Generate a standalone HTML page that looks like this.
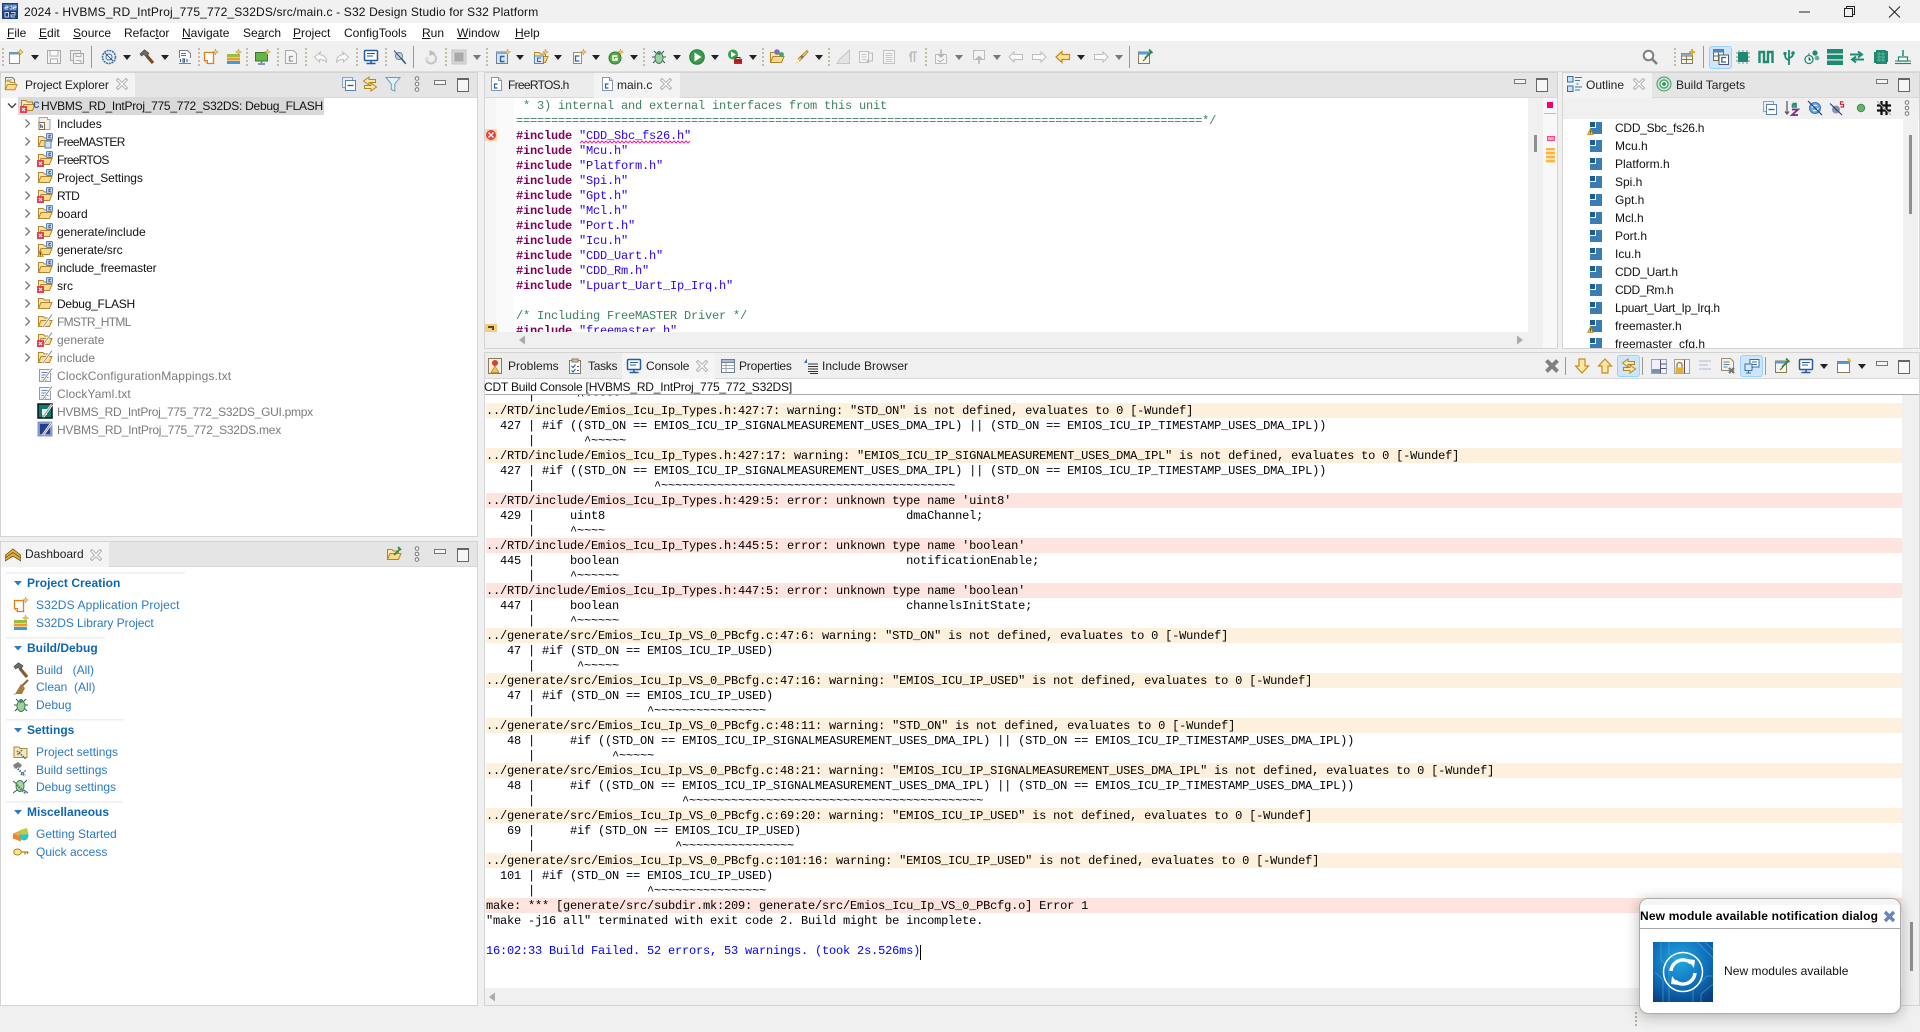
<!DOCTYPE html>
<html lang="en"><head><meta charset="utf-8"><title>S32 Design Studio</title>
<style>
html,body{margin:0;padding:0;width:1920px;height:1032px;overflow:hidden;background:#f0f0f0}
body{position:relative;font:12px/18px "Liberation Sans","Noto Sans CJK KR",sans-serif;color:#111}
div,span.a{position:absolute;white-space:pre}
.i{position:absolute;width:16px;height:16px;overflow:visible}
.b{background:#fff}
.ar{position:absolute;width:0;height:0;border:4.5px solid transparent;border-top:5px solid #222;border-bottom:0;top:55px}
.ar.gr{border-top-color:#777}
.g{width:2px;height:18px;top:48px;background:repeating-linear-gradient(#c4bca8 0 2px,transparent 2px 4px)}
.s{width:1px;height:22px;top:46px;background:#999}
.m{top:24px;line-height:18px;color:#111}
.tree{left:57px;color:#111}
.gy{color:#7b7b7b}
.o{left:1615px;color:#111}
.d{color:#2a7ac4;left:36px}
.h{color:#0f66ae;left:27px;font-weight:bold}
.mono{font-family:"Liberation Mono",monospace;font-size:12px;letter-spacing:-.2px;line-height:17px;height:15px}
.inc{color:#7f0055;font-weight:bold}.str{color:#2a00ff}.cm{color:#3f7f5f}
.l{left:0;width:1416px;height:15px;line-height:17px;color:#000}
.w{background:#fdf0dc}.e{background:#fde4df}
.tb{top:76px;color:#222}
.min{position:absolute;width:10px;height:3px;border:1px solid #777;background:#f4f4f4}
.max{position:absolute;width:10px;height:11px;border:1px solid #666;border-top-width:2px;background:#f6f6f6}
.sec{height:3px;background:linear-gradient(#ececec,#fff);left:6px}
</style></head><body>
<svg width="0" height="0" style="position:absolute"><defs>
<symbol id="x" viewBox="0 0 12 12"><path d="M2 2L10 10M10 2L2 10" stroke="#9a9a9a" stroke-width="3" stroke-linecap="square"/><path d="M2 2L10 10M10 2L2 10" stroke="#fff" stroke-width="1.500" stroke-linecap="square"/></symbol>
<symbol id="fb" viewBox="0 0 16 16"><path d="M1.500 13.500V3.500h4.500l1.500 1.500h5v2.500" fill="#fbe7a8" stroke="#b08530"/><path d="M1.500 13.500L4 7.500h11l-2.500 6z" fill="#fdd98b" stroke="#b08530"/></symbol>
<symbol id="fc" viewBox="0 0 16 16"><use href="#fb"/><rect x="9.500" y=".5" width="6" height="6" rx="1" fill="#c6d8ee" stroke="#5a82b8"/><path d="M14 2.200h-2v2.600h2" stroke="#2f5c9e" fill="none"/></symbol>
<symbol id="er" viewBox="0 0 16 16"><rect y="9" width="7" height="7" fill="#e2404f"/><path d="M2 11l3 3M5 11l-3 3" stroke="#fff"/></symbol>
<symbol id="wn" viewBox="0 0 16 16"><path d="M.5 16L3.500 9.500 6.500 16z" fill="#f4c54a" stroke="#a87c1c" stroke-width=".7"/><path d="M3.500 11.500v2.300M3.500 14.500v.8" stroke="#5a3c00"/></symbol>
<symbol id="sl" viewBox="0 0 16 16"><path d="M6 14L15 1.500" stroke="#fff" stroke-width="2.500"/><path d="M6 14L15 1.500" stroke="#8a8a8a"/></symbol>
<symbol id="txt" viewBox="0 0 16 16"><path d="M2.500 2.500h11v12h-11z" fill="#f4f6fa" stroke="#8d9ab0"/><path d="M4.500 5.500h7M4.500 8h7M4.500 10.500h7M4.500 13h5" stroke="#6d86b8"/><use href="#sl"/></symbol>
<symbol id="cf" viewBox="0 0 16 16"><path d="M3.500 1.500h7l3 3v10h-10z" fill="#fff" stroke="#8897ad"/><path d="M10.500 1.500v3h3" fill="#dde3ec" stroke="#8897ad"/><path d="M9.500 8h-3v4h3" stroke="#2b63a8" fill="none" stroke-width="1.200"/></symbol>
<symbol id="inc" viewBox="0 0 16 16"><path d="M2 2.500h5.500l3 0v2h2.500v10h-8v-2h-3z" fill="#eef0f4" stroke="#9ba6b8"/><path d="M2 7.500h5.500v7H2z" fill="#fff" stroke="#8a6c30"/><path d="M3.700 9v4M3.700 11h1.700v2" stroke="#2f5c9e" fill="none"/></symbol>
<symbol id="hd" viewBox="0 0 14 14"><rect x="1" y="1" width="5" height="5" fill="#1e5c96"/><path d="M7 1h6v12H1V7h6z" fill="#3a7db5"/></symbol>
<symbol id="new" viewBox="0 0 16 16"><path d="M1.500 3.500h10v11h-10z" fill="#fff" stroke="#9a8c6e"/><path d="M1.500 3.500h10v2h-10z" fill="#5b9bd5"/><path d="M12.500 0l1 2 2 1-2 1-1 2-1-2-2-1 2-1z" fill="#f3cf5d" stroke="#b8902c" stroke-width=".5"/></symbol>
<symbol id="sv" viewBox="0 0 16 16"><path d="M1.500 1.500h13v13h-13z" fill="#f2f2f2" stroke="#a8a8a8"/><path d="M4 2v5h8V2M4.500 14v-4h7v4" fill="#fafafa" stroke="#b4b4b4"/></symbol>
<symbol id="sva" viewBox="0 0 16 16"><path d="M1.500 1.500h10v10h-10z" fill="#ececec" stroke="#aaa"/><path d="M4.500 4.500h10v10h-10z" fill="#f2f2f2" stroke="#a8a8a8"/><path d="M7 11.500h5v3M7 4.500v3h5v-3" fill="none" stroke="#b4b4b4"/></symbol>
<symbol id="cfg" viewBox="0 0 16 16"><circle cx="8" cy="8" r="6.500" fill="#e4eef8" stroke="#456f9e" stroke-dasharray="2 .8" stroke-width="1.600"/><circle cx="8" cy="8" r="3" fill="#fff" stroke="#456f9e"/><path d="M4 4L12 12" stroke="#345a88"/></symbol>
<symbol id="ham" viewBox="0 0 16 16"><path d="M7.500 6.500L14 14" stroke="#7b4a20" stroke-width="3.200"/><path d="M1 5L5.500 .8l4.500 3.500-2.500 3-3-1.800L2.500 7z" fill="#6c6c6c" stroke="#3f3f3f" stroke-width=".6"/></symbol>
<symbol id="bin" viewBox="0 0 16 16"><path d="M2.500 1.500h8l3 3v10h-11z" fill="#fff" stroke="#7a7f8c"/><path d="M4 4.500h5M4 6.500h5" stroke="#4b78b0"/><rect x="2" y="9" width="12" height="5" fill="#eef2f8"/><path d="M3.500 10v3M6 10h1.500v3H6zM10 10v3M12 10" stroke="#28508a" fill="none" stroke-width=".9"/></symbol>
<symbol id="onw" viewBox="0 0 16 16"><path d="M1.500 3.500h9v11h-6l-3-3z" fill="#fff" stroke="#e67a17" stroke-width="1.300"/><path d="M1.500 11.500h3v3" fill="#fbd9aa" stroke="#e67a17"/><path d="M12.500 0l.8 2.200 2.200.8-2.200.8-.8 2.200-.8-2.200L9.500 3l2.200-.8z" fill="#f3cf5d" stroke="#b8902c" stroke-width=".5"/></symbol>
<symbol id="stk" viewBox="0 0 16 16"><rect x="1" y="5" width="13" height="3" fill="#9abf3f"/><rect x="1" y="8.500" width="13" height="3" fill="#f39a2d"/><rect x="1" y="12" width="13" height="3" fill="#3a9fd8"/><path d="M12.500 0l.8 2.200 2.200.8-2.200.8-.8 2.200-.8-2.200L9.500 3l2.200-.8z" fill="#f3cf5d" stroke="#b8902c" stroke-width=".5"/></symbol>
<symbol id="gmn" viewBox="0 0 16 16"><rect x=".5" y="3.500" width="12" height="8.500" fill="#69b24a" stroke="#2f7a35"/><path d="M6.500 12v2M3 15h7" stroke="#567a9e" stroke-width="1.500"/><path d="M12.500 0l.8 2.200 2.200.8-2.200.8-.8 2.200-.8-2.200L9.500 3l2.200-.8z" fill="#f3cf5d" stroke="#b8902c" stroke-width=".5"/></symbol>
<symbol id="cdg" viewBox="0 0 16 16"><path d="M2.500 1.500h8l3 3v10h-11z" fill="#f4f4f4" stroke="#a9a9a9"/><path d="M10 7.500H6.500v4.500H10" stroke="#999" fill="none" stroke-width="1.300"/></symbol>
<symbol id="und" viewBox="0 0 16 16"><path d="M8 2.500L1.500 8l5 5v-2.500c3 0 5 .5 7 2.500 0-5-3-7-7-7.500z" fill="#fafafa" stroke="#c0c0c0"/></symbol>
<symbol id="red" viewBox="0 0 16 16"><path d="M8 2.500L14.500 8l-5 5v-2.500c-3 0-5 .5-7 2.500 0-5 3-7 7-7.500z" fill="#fafafa" stroke="#c0c0c0"/></symbol>
<symbol id="bmn" viewBox="0 0 16 16"><rect x="1.500" y="1.500" width="13" height="10" rx="1" fill="#fff" stroke="#245c9e" stroke-width="1.500"/><path d="M4 4.500h8M4 7h6" stroke="#245c9e"/><path d="M8 12v2M3.500 14.500h9" stroke="#245c9e" stroke-width="1.500"/></symbol>
<symbol id="pin" viewBox="0 0 16 16"><circle cx="7" cy="7" r="3.500" fill="#c8d4e0" stroke="#688"/><path d="M9.500 9.500L13 14" stroke="#456" stroke-width="1.500"/><path d="M2 1.500L14 15" stroke="#2450a0"/></symbol>
<symbol id="dbg" viewBox="0 0 16 16"><path d="M8 4.500a5 5 0 1 1-5 5" fill="none" stroke="#c4c4c4" stroke-width="2"/><path d="M6.500 1l6 3-6 3z" fill="#bdbdbd"/><circle cx="4" cy="10" r="2" fill="#ddd"/></symbol>
<symbol id="chp" viewBox="0 0 16 16"><rect x="1" y="1" width="14" height="14" fill="#d7d7d7" stroke="#c4c4c4"/><rect x="3.500" y="3.500" width="9" height="9" fill="#a9a9a9"/></symbol>
<symbol id="cla" viewBox="0 0 16 16"><path d="M1.500 3h11v11.500h-11z" fill="#dae6f4" stroke="#6c7f9a"/><path d="M1.500 3h11v2h-11z" fill="#8aa8cc"/><path d="M9.500 7.500H5.500v5h4" stroke="#2b63a8" fill="none" stroke-width="1.400"/><path d="M12.500 0l.8 2.200 2.200.8-2.200.8-.8 2.200-.8-2.200L9.500 3l2.200-.8z" fill="#f3cf5d" stroke="#b8902c" stroke-width=".5"/></symbol>
<symbol id="cl2" viewBox="0 0 16 16"><use href="#fb"/><rect x="1.500" y="7" width="9" height="7.500" fill="#dae6f4" stroke="#5a82b8"/><path d="M8 9H4.500v3.500H8" stroke="#2b63a8" fill="none"/><path d="M12.500 0l.8 2.200 2.200.8-2.200.8-.8 2.200-.8-2.200L9.500 3l2.200-.8z" fill="#f3cf5d" stroke="#b8902c" stroke-width=".5"/></symbol>
<symbol id="cl3" viewBox="0 0 16 16"><path d="M2.500 3.500h8v11h-8z" fill="#fff" stroke="#9a8c6e"/><path d="M8.500 7H4.500v5h4" stroke="#2b63a8" fill="none" stroke-width="1.300"/><path d="M12.500 0l.8 2.200 2.200.8-2.200.8-.8 2.200-.8-2.200L9.500 3l2.200-.8z" fill="#f3cf5d" stroke="#b8902c" stroke-width=".5"/></symbol>
<symbol id="gns" viewBox="0 0 16 16"><circle cx="7" cy="9" r="6" fill="#58a845" stroke="#2e7a38"/><path d="M9.500 7H5v4h4V9.500H7" stroke="#fff" fill="none" stroke-width="1.400"/><path d="M12.500 0l.8 2.200 2.200.8-2.200.8-.8 2.200-.8-2.200L9.500 3l2.200-.8z" fill="#f3cf5d" stroke="#b8902c" stroke-width=".5"/></symbol>
<symbol id="bug" viewBox="0 0 16 16"><path d="M3 2l3 3M13 2l-3 3M1 8h3M15 8h-3M2 14l3-3M14 14l-3-3" stroke="#2a5c5a"/><ellipse cx="8" cy="9" rx="4" ry="5.500" fill="#9fcf9a" stroke="#3d7a58"/><circle cx="8" cy="4" r="2" fill="#4a8a6a"/></symbol>
<symbol id="run" viewBox="0 0 16 16"><circle cx="8" cy="8" r="7.300" fill="#3d9b4a" stroke="#1f7a3c"/><path d="M5.500 3.500L12.500 8l-7 4.500z" fill="#fff"/></symbol>
<symbol id="ext" viewBox="0 0 16 16"><circle cx="6" cy="5.500" r="5" fill="#3d9b4a"/><path d="M4 2.500L9 5.500 4 8.500z" fill="#fff"/><rect x="7" y="10" width="8" height="5" fill="#cc2222"/><path d="M9 10V8.500h4V10M7 12h8" stroke="#8a1414" fill="none"/></symbol>
<symbol id="opn" viewBox="0 0 16 16"><use href="#fb"/><circle cx="8" cy="3" r="2.800" fill="#7a6cc0"/><circle cx="12.500" cy="5.500" r="2.400" fill="#45a560"/></symbol>
<symbol id="pen" viewBox="0 0 16 16"><path d="M14 1.500L6 9l-3.500 5L7.500 11l7.500-8z" fill="#f4d78f" stroke="#b98a30"/><path d="M4 9.500L1 15l5.500-3z" fill="#fff7c7"/><path d="M8 7l2 2" stroke="#777" stroke-width="3"/></symbol>
<symbol id="gpn" viewBox="0 0 16 16"><path d="M14.500 1L5 10l-3 4.500h12.500z" fill="#e4e4e4" stroke="#c6c6c6"/></symbol>
<symbol id="gd1" viewBox="0 0 16 16"><path d="M1.500 2.500h9v11h-9z" fill="#f6f6f6" stroke="#c0c0c0"/><path d="M3.500 5.500h5M3.500 8h5M3.500 10.500h5" stroke="#c8c8c8"/><path d="M10 4h4.500v8H9M11 14l-2-2 2-2" fill="none" stroke="#bcbcbc"/></symbol>
<symbol id="gd2" viewBox="0 0 16 16"><path d="M2.500 1.500h11v13h-11z" fill="#f6f6f6" stroke="#c0c0c0"/><path d="M4.500 4.500h7M4.500 6.500h7M4.500 8.500h7M4.500 10.500h7M4.500 12.500h7" stroke="#c6c6c6"/></symbol>
<symbol id="par" viewBox="0 0 16 16"><path d="M7 3h6M7 3v10M10.500 3v10" stroke="#bcbcbc" stroke-width="1.500" fill="none"/><path d="M7 3.500a3 3 0 0 0 0 5.500z" fill="#bcbcbc"/></symbol>
<symbol id="dns" viewBox="0 0 16 16"><path d="M2.500 5.500h11v9h-11z" fill="#f4f4f4" stroke="#bdbdbd"/><path d="M8 0.500v7M5 5l3 3 3-3" stroke="#b4b4b4" fill="none" stroke-width="1.500"/><path d="M5 11l2 2 4-3" stroke="#b0b0b0" fill="none"/></symbol>
<symbol id="ups" viewBox="0 0 16 16"><path d="M2.500 1.500h11v9h-11z" fill="#f4f4f4" stroke="#bdbdbd"/><path d="M8 15V8M5 10.500l3-3 3 3" stroke="#b4b4b4" fill="none" stroke-width="1.500"/></symbol>
<symbol id="lbk" viewBox="0 0 16 16"><path d="M1 8l5-5v2.500h8.500v5H6V13z" fill="#fafafa" stroke="#bcbcbc"/></symbol>
<symbol id="rfw" viewBox="0 0 16 16"><path d="M15 8l-5-5v2.500H1.500v5H10V13z" fill="#fafafa" stroke="#bcbcbc"/></symbol>
<symbol id="ybk" viewBox="0 0 16 16"><path d="M1 8l6-5.500V5.500h7.500v5H7v3z" fill="#fbe29a" stroke="#c88a1a" stroke-width="1.200"/></symbol>
<symbol id="pup" viewBox="0 0 16 16"><path d="M1.500 3h11v11.500h-11z" fill="#f6f6ec" stroke="#8a7a55"/><path d="M1.500 3h11v2.500h-11z" fill="#5b9bd5"/><path d="M8 9L14.500 3M12 .5l3.500 3.500" stroke="#2a8a3a" stroke-width="1.800"/><path d="M6 12l3-3" stroke="#555"/></symbol>
<symbol id="mag" viewBox="0 0 16 16"><circle cx="6.500" cy="6.500" r="4.800" fill="#fff" stroke="#808080" stroke-width="2"/><path d="M10 10L15 15" stroke="#808080" stroke-width="2.600"/></symbol>
<symbol id="prs" viewBox="0 0 16 16"><path d="M1.500 4.500h11v10h-11z" fill="#f6f3ea" stroke="#8a7a55"/><path d="M1.500 4.500h11v2.500h-11zM6.500 7v7.500M1.500 10.500h11" fill="none" stroke="#8a7a55"/><rect x="1.500" y="4.500" width="11" height="2.500" fill="#8aa8cc"/><path d="M12 0v6M9 3h6" stroke="#e0aa2a" stroke-width="2"/></symbol>
<symbol id="prc" viewBox="0 0 16 16"><path d="M.5 .5h10v11H.5z" fill="#eef2f8" stroke="#7c6a44"/><rect x=".5" y=".5" width="10" height="3" fill="#4f8ac4"/><path d="M.5 7h5M5.500 3.500v8" stroke="#7c6a44"/><rect x="6" y="6" width="9.500" height="9.500" fill="#fff" stroke="#556"/><path d="M13 8.500H8.800v4.500H13" stroke="#2b63a8" fill="none" stroke-width="1.300"/></symbol>
<symbol id="t1" viewBox="0 0 16 16"><path d="M1 4h14M1 8h14M1 12h14M4 1v14M8 1v14M12 1v14" stroke="#4e9a8a" stroke-width=".9"/><rect x="3" y="3" width="10" height="10" rx="1" fill="#1f8a72"/></symbol>
<symbol id="t2" viewBox="0 0 16 16"><path d="M1.500 14V3h4.500v10h4V3h4.500v11" fill="none" stroke="#1f8a72" stroke-width="2.400"/></symbol>
<symbol id="t3" viewBox="0 0 16 16"><path d="M8 1v15M8 11C4 10 4 7 4 5M8 9c4-1 4-3 4-4" fill="none" stroke="#1f8a72" stroke-width="1.800"/><rect x="2.500" y="3" width="3" height="3" fill="#1f8a72"/><circle cx="12" cy="4" r="1.800" fill="#1f8a72"/></symbol>
<symbol id="t4" viewBox="0 0 16 16"><circle cx="5" cy="10.500" r="4" fill="#fff" stroke="#1f8a72" stroke-width="1.300"/><path d="M5 8v3h2M4 5h2" stroke="#1f8a72"/><circle cx="11" cy="4" r="2.600" fill="#1f8a72"/><circle cx="13" cy="9" r="2.300" fill="#6aac9a"/></symbol>
<symbol id="t5" viewBox="0 0 16 16"><rect width="16" height="4.500" fill="#1f8a72"/><rect y="5.800" width="16" height="4.500" fill="#1f8a72"/><rect y="11.500" width="16" height="4.500" fill="#1f8a72"/></symbol>
<symbol id="t6" viewBox="0 0 16 16"><path d="M1 5.500h11M9 2.500l4 3-4 3M15 10.500H4M7 7.500l-4 3 4 3" fill="none" stroke="#1f8a72" stroke-width="2"/></symbol>
<symbol id="t7" viewBox="0 0 16 16"><path d="M1 3v11h2v1h11v-2h1V2h-2V1H3v2z" fill="#1f8a72"/><path d="M4 5h8M4 8h8M4 11h8M6 3v10M10 3v10" stroke="#6ebfa8" stroke-width=".7"/></symbol>
<symbol id="t8" viewBox="0 0 16 16"><path d="M8 1v6" stroke="#1f8a72" stroke-width="1.500"/><path d="M3.500 8h9v4h-9z" fill="#fff" stroke="#1f8a72" stroke-width="1.200"/><path d="M0 14.500h16" stroke="#1f8a72" stroke-width="1.200"/><path d="M0 12h3M13 12h3" stroke="#1f8a72"/></symbol>
<symbol id="col" viewBox="0 0 16 16"><path d="M1.500 1.500h10v10h-10z" fill="#e8eef6" stroke="#8aa4c4"/><path d="M4.500 4.500h10v10h-10z" fill="#fff" stroke="#5a82b0"/><path d="M6.500 9.500h6" stroke="#2f5c9e" stroke-width="1.300"/></symbol>
<symbol id="lnk" viewBox="0 0 16 16"><path d="M7 1L1.500 5 7 9V6.500h6.500v-3H7z" fill="#fbe7a8" stroke="#b5851c"/><path d="M9 7l5.500 4L9 15v-2.500H2.500v-3H9z" fill="#fbe7a8" stroke="#b5851c"/></symbol>
<symbol id="flt" viewBox="0 0 16 16"><path d="M1 1.500h14L9.800 8v7l-3.500-1.500V8z" fill="#e4f0f8" stroke="#6a9bb8"/></symbol>
<symbol id="mor" viewBox="0 0 16 16"><circle cx="8" cy="2.500" r="1.800" fill="#fff" stroke="#777"/><circle cx="8" cy="8" r="1.800" fill="#fff" stroke="#777"/><circle cx="8" cy="13.500" r="1.800" fill="#fff" stroke="#777"/></symbol>
<symbol id="pe" viewBox="0 0 16 16"><path d="M1.500 1.500h7l2 2v5h-9z" fill="#eef0f4" stroke="#8a7a55"/><path d="M3 4h5M3 6h5" stroke="#c8a45a"/><use href="#fb" x="0" y="2" width="14" height="14"/></symbol>
<symbol id="otl" viewBox="0 0 16 16"><rect x=".5" y=".5" width="5.500" height="5.500" fill="#cfe0f2" stroke="#2f6fb0"/><rect x=".5" y="10" width="5.500" height="5.500" fill="#cfe0f2" stroke="#2f6fb0"/><path d="M8 1.500h7M8 4.500h5M8 11h7M8 14h5M9.500 8h2" stroke="#3a7a9e"/></symbol>
<symbol id="btg" viewBox="0 0 16 16"><circle cx="8" cy="8" r="7" fill="#c8e8d4" stroke="#3d9a62"/><circle cx="8" cy="8" r="4" fill="#fff" stroke="#3d9a62" stroke-width="1.300"/><circle cx="8" cy="8" r="2" fill="#3d9a62"/></symbol>
<symbol id="az" viewBox="0 0 16 16"><path d="M3 1v13M1 11.500L3 14l2-2.500" fill="none" stroke="#555" stroke-width="1.200"/><path d="M8.500 3.500h3.500v3.500H8.500V5h3.500" fill="none" stroke="#1f8a72" stroke-width="1.600"/><path d="M8 9.500h6L8 15h6" fill="none" stroke="#7a2a8a" stroke-width="1.800"/></symbol>
<symbol id="nf" viewBox="0 0 16 16"><circle cx="8" cy="8" r="5.500" fill="#6fa8dc" stroke="#3a75b0"/><path d="M5 8a3 3 0 0 1 5-2M11 8a3 3 0 0 1-5 2" stroke="#fff" fill="none"/><path d="M1 1L15 15" stroke="#1b3f90" stroke-width="1.200"/></symbol>
<symbol id="ns" viewBox="0 0 16 16"><circle cx="7" cy="9.500" r="4" fill="#8a95a5"/><path d="M1 3.500L13 15" stroke="#1b3f90" stroke-width="1.200"/><path d="M14.500 1.800h-3v2.500h3V7h-3" stroke="#d0203c" fill="none" stroke-width="1.200"/></symbol>
<symbol id="dot" viewBox="0 0 16 16"><circle cx="8" cy="8" r="3.700" fill="#6ab06a" stroke="#468a5a"/></symbol>
<symbol id="hsh" viewBox="0 0 16 16"><path d="M5.500 1v14M10.500 1v14M1 5.500h14M1 10.500h14" stroke="#111" stroke-width="2.300"/><path d="M1 1l14 14" stroke="#aaa"/></symbol>
<symbol id="prb" viewBox="0 0 16 16"><path d="M1.500 .5h13v15h-13z" fill="#f4f0e4" stroke="#8a7a55"/><circle cx="8" cy="5" r="3" fill="#e03a3a"/><path d="M8 8L4 14.500h8z" fill="#f4c54a" stroke="#a87c1c" stroke-width=".7"/></symbol>
<symbol id="tsk" viewBox="0 0 16 16"><path d="M2.500 2.500h11v13h-11z" fill="#fff" stroke="#8a7a55"/><path d="M5 1h6v3H5z" fill="#cfc8b2" stroke="#8a7a55"/><path d="M4.500 8l1.500 1.500 2.500-3M4.500 12.500l1.500 1.500 2.500-3M10 8.500h2M10 12.500h2" stroke="#2f5c9e" fill="none" stroke-width="1.100"/></symbol>
<symbol id="prp" viewBox="0 0 16 16"><path d="M1.500 1.500h13v13h-13z" fill="#fff" stroke="#6e7e98"/><path d="M1.500 1.500h13v3h-13z" fill="#a7bcd8" stroke="#6e7e98"/><path d="M1.500 7.500h13M1.500 10.500h13M6 4.500v10" stroke="#9aa6b8"/></symbol>
<symbol id="inb" viewBox="0 0 16 16"><path d="M5 6h10M5 8.500h10M5 11h10M5 13.500h10M7 15.500h8" stroke="#333"/><path d="M1 5L4 0.500V5z" fill="#2f6fb0"/></symbol>
<symbol id="gx" viewBox="0 0 16 16"><path d="M2.500 2.500L13.500 13.500M13.500 2.500L2.500 13.500" stroke="#808080" stroke-width="4"/></symbol>
<symbol id="dn" viewBox="0 0 16 16"><path d="M5 1h6v7h3.500L8 15 1.500 8H5z" fill="#fbe7a8" stroke="#c88a1a" stroke-width="1.200"/></symbol>
<symbol id="up" viewBox="0 0 16 16"><path d="M5 15h6V8h3.500L8 1 1.500 8H5z" fill="#fbe7a8" stroke="#c88a1a" stroke-width="1.200"/></symbol>
<symbol id="c1" viewBox="0 0 16 16"><path d="M.5 1.500h15v14H.5z" fill="#eef" stroke="#9aa6b8"/><path d="M9.500 1.500v14M9.500 6h6M9.500 10.500h6" stroke="#556"/><rect x="1" y="11" width="8" height="4" fill="#7a90b0"/></symbol>
<symbol id="c2" viewBox="0 0 16 16"><path d="M.5 1.500h15v14H.5z" fill="#f4f4f4" stroke="#9aa6b8"/><path d="M10.500 1.500v14" stroke="#556"/><path d="M3 9.500V7a2.500 2.500 0 0 1 5 0v2.500" fill="none" stroke="#a07818" stroke-width="1.200"/><rect x="1.500" y="9.500" width="8" height="6" fill="#e0b23a"/></symbol>
<symbol id="c3" viewBox="0 0 16 16"><path d="M2 3h12M2 7h9M2 11h12" stroke="#b8c6d8" stroke-width="1.200"/></symbol>
<symbol id="c4" viewBox="0 0 16 16"><path d="M1.500 .5h9l3 3v9h-12z" fill="#f4f1e6" stroke="#9a8c6e"/><path d="M3.500 4h6M3.500 6.500h6M3.500 9h4" stroke="#5f82b0"/><path d="M9 10l5 5M14 10l-5 5" stroke="#777" stroke-width="2.200"/></symbol>
<symbol id="c5" viewBox="0 0 16 16"><path d="M6 1.500h9v7.500H9l-3 3z" fill="#fff" stroke="#3a6ea8"/><path d="M8 4h5M8 6.500h5" stroke="#3a6ea8"/><rect x="1" y="6" width="7" height="6.500" fill="#dbe6f3" stroke="#3a6ea8"/><path d="M4.500 12.500v2M2 15h5" stroke="#3a6ea8"/></symbol>
<symbol id="c6" viewBox="0 0 16 16"><path d="M1.500 3.500h12v11h-12z" fill="#fff" stroke="#8a7a55"/><rect x="1.500" y="3.500" width="12" height="2.500" fill="#5b9bd5"/><path d="M12 1l2.500 3" stroke="#e0aa2a" stroke-width="2"/><path d="M11.500 .5a3 3 0 0 1 3 3" fill="none" stroke="#e8c55a" stroke-width="1.500"/></symbol>
<symbol id="bld" viewBox="0 0 16 16"><path d="M7 6.500L14 15" stroke="#8a5a2a" stroke-width="3.200"/><path d="M1 4.500L5.500 .8 10 4 7.500 7.500 5 5.500 2.500 7z" fill="#6c6c6c" stroke="#3f3f3f" stroke-width=".6"/></symbol>
<symbol id="cln" viewBox="0 0 16 16"><path d="M15 1L8 8" stroke="#8a6a3a" stroke-width="2"/><path d="M8 5l4 4-3 6-7 0z" fill="#a87a3c"/><path d="M2 15l-1 1" stroke="#999"/></symbol>
<symbol id="gs" viewBox="0 0 16 16"><path d="M0 7.500l7-3 8 3-7 3z" fill="#f2a646"/><path d="M0 7.500l8 3v5l-8-3z" fill="#e8862a"/><circle cx="11" cy="10" r="4.500" fill="#36c0c8"/><path d="M7 4l7-2 1.500 6L8 9z" fill="#b2d243"/></symbol>
<symbol id="key" viewBox="0 0 16 16"><ellipse cx="4.500" cy="8" rx="3.800" ry="3" fill="#fce28a" stroke="#b0821f"/><path d="M8 8h7.500M12 8v2.500M14.500 8v2" stroke="#b0821f" stroke-width="1.300" fill="none"/></symbol>
<symbol id="hf" viewBox="0 0 16 16"><path d="M0 9.500L8 3l8 6.500V15l-8-5-8 5z" fill="#eab53c" stroke="#6a5012" stroke-width=".8"/><path d="M0 12L8 6.500 16 12" fill="none" stroke="#6a5012" stroke-width=".8"/></symbol>
<symbol id="st1" viewBox="0 0 16 16"><path d="M1 6V3h5l1 1.500h7v9H1z" fill="#f9e5b0" stroke="#a88a4a"/><path d="M4 7l9 8M9 6l-5 5" stroke="#4a6a8a" stroke-width="1.500" stroke-dasharray="1.500 1"/></symbol>
<symbol id="st2" viewBox="0 0 16 16"><path d="M3 5l9 9" stroke="#4a6a8a" stroke-width="2" stroke-dasharray="1.500 1"/><path d="M0 3l5-3 4 3-2 3-3-1-2 2z" fill="#808080"/><path d="M8 13l5-5" stroke="#4a6a8a" stroke-width="1.500" stroke-dasharray="1.500 1"/></symbol>
<symbol id="st3" viewBox="0 0 16 16"><path d="M0 2l4 3M14 1l-4 4M0 14l4-3M15 14l-4-3" stroke="#2a5c5a"/><ellipse cx="7" cy="7" rx="4" ry="5.500" fill="#a9d69e" stroke="#3d7a58"/><path d="M4 6l9 9" stroke="#4a6a8a" stroke-width="2" stroke-dasharray="1.500 1"/></symbol>
</defs></svg>

<!-- title -->
<div style="left:0;top:0;width:1920px;height:23px;background:#f1f1f1"></div>
<svg class="i" style="left:2px;top:3px" viewBox="0 0 16 16"><rect width="16" height="16" fill="#1c3f7c"/><rect x="1" y="1" width="14" height="7" fill="#3a64a8"/><path d="M3 3h3v1.500H3V6h3M7.500 3H10v3H7.500M11 3h3v1.500h-2.500V6H14" fill="none" stroke="#fff" stroke-width=".8"/><path d="M3 9.500h3.500v4.500H3zM9 9.500h4V12H9v2h4" fill="none" stroke="#c5d4ea"/></svg>
<div style="left:24px;top:3px;letter-spacing:.15px">2024 - HVBMS_RD_IntProj_775_772_S32DS/src/main.c - S32 Design Studio for S32 Platform</div>
<svg style="position:absolute;left:1797px;top:5px" width="112" height="14"><path d="M2 7h11" stroke="#222"/><path d="M47.500 3.500h8v8h-8zM49.500 3.500v-2h8v8h-2" fill="none" stroke="#222"/><path d="M92 1.500l11 11M103 1.500l-11 11" stroke="#222"/></svg>

<!-- menu -->
<div style="left:0;top:23px;width:1920px;height:18px;background:#fff"></div>
<div class="m" style="left:7px"><u>F</u>ile</div><div class="m" style="left:39px"><u>E</u>dit</div><div class="m" style="left:73px"><u>S</u>ource</div><div class="m" style="left:124px">Refac<u>t</u>or</div><div class="m" style="left:182px"><u>N</u>avigate</div><div class="m" style="left:243px">Se<u>a</u>rch</div><div class="m" style="left:293px"><u>P</u>roject</div><div class="m" style="left:344px">ConfigTools</div><div class="m" style="left:422px"><u>R</u>un</div><div class="m" style="left:457px"><u>W</u>indow</div><div class="m" style="left:515px"><u>H</u>elp</div>

<!-- toolbar -->
<div style="left:0;top:41px;width:1920px;height:30px;background:#f0f0f0;border-bottom:1px solid #dcdcdc"></div>
<div class="g" style="left:2px"></div>
<svg class="i" style="left:8px;top:49px"><use href="#new"/></svg><span class="ar" style="left:31px"></span>
<svg class="i" style="left:46px;top:49px"><use href="#sv"/></svg><svg class="i" style="left:69px;top:49px"><use href="#sva"/></svg><div class="s" style="left:91px"></div>
<svg class="i" style="left:101px;top:49px"><use href="#cfg"/></svg><span class="ar" style="left:123px"></span>
<svg class="i" style="left:139px;top:49px"><use href="#ham"/></svg><span class="ar" style="left:161px"></span>
<svg class="i" style="left:177px;top:49px"><use href="#bin"/></svg><div class="g" style="left:198px"></div>
<svg class="i" style="left:203px;top:49px"><use href="#onw"/></svg><svg class="i" style="left:226px;top:49px"><use href="#stk"/></svg><div class="g" style="left:246px"></div>
<svg class="i" style="left:255px;top:49px"><use href="#gmn"/></svg><div class="g" style="left:277px"></div>
<svg class="i" style="left:283px;top:49px"><use href="#cdg"/></svg><div class="g" style="left:305px"></div>
<svg class="i" style="left:313px;top:49px"><use href="#und"/></svg><svg class="i" style="left:334px;top:49px"><use href="#red"/></svg><div class="g" style="left:356px"></div>
<svg class="i" style="left:363px;top:49px"><use href="#bmn"/></svg><div class="g" style="left:385px"></div>
<svg class="i" style="left:392px;top:49px"><use href="#pin"/></svg><div class="s" style="left:413px"></div>
<svg class="i" style="left:423px;top:49px"><use href="#dbg"/></svg><div class="g" style="left:445px"></div>
<svg class="i" style="left:451px;top:49px"><use href="#chp"/></svg><span class="ar gr" style="left:473px"></span><div class="g" style="left:486px"></div>
<svg class="i" style="left:495px;top:49px"><use href="#cla"/></svg><span class="ar" style="left:516px"></span>
<svg class="i" style="left:533px;top:49px"><use href="#cl2"/></svg><span class="ar" style="left:554px"></span>
<svg class="i" style="left:571px;top:49px"><use href="#cl3"/></svg><span class="ar" style="left:592px"></span>
<svg class="i" style="left:608px;top:49px"><use href="#gns"/></svg><span class="ar" style="left:630px"></span><div class="g" style="left:643px"></div>
<svg class="i" style="left:651px;top:49px"><use href="#bug"/></svg><span class="ar" style="left:673px"></span>
<svg class="i" style="left:689px;top:49px"><use href="#run"/></svg><span class="ar" style="left:711px"></span>
<svg class="i" style="left:727px;top:49px"><use href="#ext"/></svg><span class="ar" style="left:749px"></span><div class="g" style="left:762px"></div>
<svg class="i" style="left:769px;top:49px"><use href="#opn"/></svg><svg class="i" style="left:793px;top:49px"><use href="#pen"/></svg><span class="ar" style="left:815px"></span><div class="g" style="left:828px"></div>
<svg class="i" style="left:835px;top:49px"><use href="#gpn"/></svg><svg class="i" style="left:858px;top:49px"><use href="#gd1"/></svg><svg class="i" style="left:881px;top:49px"><use href="#gd2"/></svg><svg class="i" style="left:904px;top:49px"><use href="#par"/></svg><div class="g" style="left:925px"></div>
<svg class="i" style="left:933px;top:49px"><use href="#dns"/></svg><span class="ar gr" style="left:955px"></span>
<svg class="i" style="left:971px;top:49px"><use href="#ups"/></svg><span class="ar gr" style="left:993px"></span>
<svg class="i" style="left:1008px;top:49px"><use href="#lbk"/></svg><svg class="i" style="left:1031px;top:49px"><use href="#rfw"/></svg>
<svg class="i" style="left:1055px;top:49px"><use href="#ybk"/></svg><span class="ar" style="left:1077px"></span>
<svg class="i" style="left:1093px;top:49px"><use href="#rfw"/></svg><span class="ar gr" style="left:1115px"></span><div class="s" style="left:1129px"></div>
<svg class="i" style="left:1137px;top:49px"><use href="#pup"/></svg>
<svg class="i" style="left:1642px;top:49px"><use href="#mag"/></svg><div class="g" style="left:1674px"></div>
<svg class="i" style="left:1680px;top:49px"><use href="#prs"/></svg><div class="s" style="left:1703px"></div>
<div style="left:1709px;top:46px;width:21px;height:21px;background:#cde6fb;border:1px solid #99d1ff;border-radius:3px"></div>
<svg class="i" style="left:1713px;top:49px"><use href="#prc"/></svg><svg class="i" style="left:1735px;top:49px"><use href="#t1"/></svg><svg class="i" style="left:1758px;top:49px"><use href="#t2"/></svg><svg class="i" style="left:1781px;top:49px"><use href="#t3"/></svg><svg class="i" style="left:1804px;top:49px"><use href="#t4"/></svg><svg class="i" style="left:1827px;top:49px"><use href="#t5"/></svg><svg class="i" style="left:1849px;top:49px"><use href="#t6"/></svg><svg class="i" style="left:1873px;top:49px"><use href="#t7"/></svg><svg class="i" style="left:1895px;top:49px"><use href="#t8"/></svg>

<!-- project explorer -->
<div style="left:0;top:72px;width:478px;height:465px;background:#fff;border:1px solid #d4d4d4;border-top:1px solid #d4d4d4;box-sizing:border-box"></div>
<div style="left:1px;top:73px;width:476px;height:24px;background:#e5e5e5;border-bottom:1px solid #d8d8d8"></div>
<div style="left:1px;top:73px;width:134px;height:25px;background:#f3f3f3"></div>
<svg class="i" style="left:4px;top:76px"><use href="#pe"/></svg>
<div class="tb" style="left:25px;letter-spacing:-.1px">Project Explorer</div><svg class="i" style="left:116px;top:78px;width:12px;height:12px"><use href="#x"/></svg>
<svg class="i" style="left:341px;top:76px"><use href="#col"/></svg><svg class="i" style="left:362px;top:76px"><use href="#lnk"/></svg><svg class="i" style="left:385px;top:76px"><use href="#flt"/></svg><svg class="i" style="left:409px;top:76px"><use href="#mor"/></svg>
<span class="min" style="left:434px;top:80px"></span><span class="max" style="left:457px;top:78px"></span>

<div style="left:18px;top:97px;width:306px;height:18px;background:#d9d9d9"></div>
<svg style="position:absolute;left:7px;top:102px" width="10" height="8"><path d="M1 1.500l4 4 4-4" fill="none" stroke="#444" stroke-width="1.400"/></svg>
<svg class="i" style="left:20px;top:97px"><use href="#fb"/><use href="#er"/></svg><div style="left:33px;top:96px;font-size:9px;color:#2f5c9e;font-weight:bold">C</div>
<div class="tree" style="left:41px;top:97px;letter-spacing:-.27px">HVBMS_RD_IntProj_775_772_S32DS: Debug_FLASH</div>

<svg style="position:absolute;left:0;top:0" width="60" height="440"><g fill="none" stroke="#777" stroke-width="1.300"><path d="M25.500 119.500l4 4-4 4M25.500 137.500l4 4-4 4M25.500 155.500l4 4-4 4M25.500 173.500l4 4-4 4M25.500 191.500l4 4-4 4M25.500 209.500l4 4-4 4M25.500 227.500l4 4-4 4M25.500 245.500l4 4-4 4M25.500 263.500l4 4-4 4M25.500 281.500l4 4-4 4M25.500 299.500l4 4-4 4M25.500 317.500l4 4-4 4M25.500 335.500l4 4-4 4M25.500 353.500l4 4-4 4"/></g></svg>
<svg class="i" style="left:37px;top:115px"><use href="#inc"/></svg><div class="tree" style="top:115px">Includes</div>
<svg class="i" style="left:37px;top:133px"><use href="#fc"/><rect x="8" y="8" width="6" height="7" fill="#cfe0f2" stroke="#5a82b8"/></svg><div class="tree" style="top:133px;letter-spacing:-.7px">FreeMASTER</div>
<svg class="i" style="left:37px;top:151px"><use href="#fc"/><use href="#er"/></svg><div class="tree" style="top:151px;letter-spacing:-.75px">FreeRTOS</div>
<svg class="i" style="left:37px;top:169px"><use href="#fc"/></svg><div class="tree" style="top:169px;letter-spacing:-.1px">Project_Settings</div>
<svg class="i" style="left:37px;top:187px"><use href="#fc"/><use href="#er"/></svg><div class="tree" style="top:187px;letter-spacing:-.8px">RTD</div>
<svg class="i" style="left:37px;top:205px"><use href="#fc"/></svg><div class="tree" style="top:205px">board</div>
<svg class="i" style="left:37px;top:223px"><use href="#fc"/><use href="#er"/></svg><div class="tree" style="top:223px">generate/include</div>
<svg class="i" style="left:37px;top:241px"><use href="#fc"/><use href="#wn"/></svg><div class="tree" style="top:241px;letter-spacing:-.1px">generate/src</div>
<svg class="i" style="left:37px;top:259px"><use href="#fc"/></svg><div class="tree" style="top:259px;letter-spacing:-.14px">include_freemaster</div>
<svg class="i" style="left:37px;top:277px"><use href="#fc"/><use href="#er"/></svg><div class="tree" style="top:277px">src</div>
<svg class="i" style="left:37px;top:295px"><use href="#fb"/></svg><div class="tree" style="top:295px;letter-spacing:-.25px">Debug_FLASH</div>
<svg class="i" style="left:37px;top:313px"><use href="#fb"/><use href="#sl"/></svg><div class="tree gy" style="top:313px;letter-spacing:-.7px">FMSTR_HTML</div>
<svg class="i" style="left:37px;top:331px"><use href="#fb"/><use href="#sl"/><use href="#er"/></svg><div class="tree gy" style="top:331px">generate</div>
<svg class="i" style="left:37px;top:349px"><use href="#fb"/><use href="#sl"/></svg><div class="tree gy" style="top:349px">include</div>
<svg class="i" style="left:37px;top:367px"><use href="#txt"/></svg><div class="tree gy" style="top:367px;letter-spacing:.16px">ClockConfigurationMappings.txt</div>
<svg class="i" style="left:37px;top:385px"><use href="#txt"/></svg><div class="tree gy" style="top:385px;letter-spacing:.1px">ClockYaml.txt</div>
<svg class="i" style="left:37px;top:403px" viewBox="0 0 16 16"><rect x="1" y="1" width="14" height="14" fill="#0c7a6e" stroke="#111" stroke-width="1.500"/><rect x="5" y="6" width="5" height="6" fill="#e4f2f0"/><use href="#sl"/></svg><div class="tree gy" style="top:403px;letter-spacing:-.28px">HVBMS_RD_IntProj_775_772_S32DS_GUI.pmpx</div>
<svg class="i" style="left:37px;top:421px" viewBox="0 0 16 16"><rect x=".5" y=".5" width="15" height="15" fill="#8a93c8"/><rect x="3" y="3" width="10" height="10" fill="#1f3f8c"/><use href="#sl"/></svg><div class="tree gy" style="top:421px;letter-spacing:-.24px">HVBMS_RD_IntProj_775_772_S32DS.mex</div>

<!-- dashboard -->
<div style="left:0;top:541px;width:478px;height:465px;background:#fff;border:1px solid #d4d4d4;box-sizing:border-box"></div>
<div style="left:1px;top:542px;width:476px;height:24px;background:#e5e5e5;border-bottom:1px solid #d8d8d8"></div>
<div style="left:1px;top:542px;width:108px;height:25px;background:#f3f3f3"></div>
<svg class="i" style="left:5px;top:546px"><use href="#hf"/></svg><div style="left:25px;top:545px;color:#222">Dashboard</div><svg class="i" style="left:90px;top:549px;width:12px;height:12px"><use href="#x"/></svg>
<svg class="i" style="left:386px;top:546px"><use href="#fb"/><path d="M8 9l6-6M12 1l3 3" stroke="#2a8a3a" stroke-width="1.700"/></svg><svg class="i" style="left:409px;top:546px"><use href="#mor"/></svg><span class="min" style="left:434px;top:549px"></span><span class="max" style="left:457px;top:548px"></span>

<div class="sec" style="top:572px;width:179px"></div>
<svg style="position:absolute;left:13px;top:580px" width="10" height="7"><path d="M1 1h8L5 5.500z" fill="#2a7ac4"/></svg><div class="h" style="top:574px;letter-spacing:.04px">Project Creation</div>
<svg class="i" style="left:13px;top:597px"><use href="#onw"/></svg><div class="d" style="top:596px;letter-spacing:.14px">S32DS Application Project</div>
<svg class="i" style="left:13px;top:615px"><use href="#stk"/></svg><div class="d" style="top:614px;letter-spacing:-.05px">S32DS Library Project</div>
<div class="sec" style="top:637px;width:99px"></div>
<svg style="position:absolute;left:13px;top:645px" width="10" height="7"><path d="M1 1h8L5 5.500z" fill="#2a7ac4"/></svg><div class="h" style="top:639px">Build/Debug</div>
<svg class="i" style="left:13px;top:662px"><use href="#bld"/></svg><div class="d" style="top:661px">Build   (All)</div>
<svg class="i" style="left:13px;top:679px"><use href="#cln"/></svg><div class="d" style="top:678px">Clean  (All)</div>
<svg class="i" style="left:13px;top:697px"><use href="#bug"/></svg><div class="d" style="top:696px">Debug</div>
<div class="sec" style="top:719px;width:118px"></div>
<svg style="position:absolute;left:13px;top:727px" width="10" height="7"><path d="M1 1h8L5 5.500z" fill="#2a7ac4"/></svg><div class="h" style="top:721px">Settings</div>
<svg class="i" style="left:13px;top:744px"><use href="#st1"/></svg><div class="d" style="top:743px">Project settings</div>
<svg class="i" style="left:13px;top:762px"><use href="#st2"/></svg><div class="d" style="top:761px">Build settings</div>
<svg class="i" style="left:13px;top:779px"><use href="#st3"/></svg><div class="d" style="top:778px">Debug settings</div>
<div class="sec" style="top:801px;width:117px"></div>
<svg style="position:absolute;left:13px;top:809px" width="10" height="7"><path d="M1 1h8L5 5.500z" fill="#2a7ac4"/></svg><div class="h" style="top:803px">Miscellaneous</div>
<svg class="i" style="left:13px;top:826px"><use href="#gs"/></svg><div class="d" style="top:825px">Getting Started</div>
<svg class="i" style="left:13px;top:844px"><use href="#key"/></svg><div class="d" style="top:843px">Quick access</div>

<!-- editor -->
<div style="left:484px;top:72px;width:1074px;height:277px;background:#fff;border:1px solid #d4d4d4;box-sizing:border-box"></div>
<div style="left:485px;top:73px;width:1072px;height:24px;background:#e5e5e5;border-bottom:1px solid #d8d8d8"></div>
<div style="left:485px;top:73px;width:109px;height:24px;background:#ececec"></div>
<div style="left:594px;top:73px;width:86px;height:25px;background:#f3f3f3"></div>
<svg class="i" style="left:488px;top:76px"><use href="#cf"/></svg><div class="tb" style="left:508px;letter-spacing:-.7px">FreeRTOS.h</div>
<svg class="i" style="left:599px;top:76px"><use href="#cf"/></svg><div class="tb" style="left:617px">main.c</div><svg class="i" style="left:660px;top:78px;width:12px;height:12px"><use href="#x"/></svg>
<span class="min" style="left:1514px;top:79px"></span><span class="max" style="left:1536px;top:78px"></span>

<div style="left:485px;top:98px;width:11px;height:234px;background:#f6f6f6"></div>
<div style="left:496px;top:98px;width:18px;height:234px;background:#fafafa"></div>
<div style="left:485px;top:129px;width:12px;height:12px;background:#fbd9a8"></div>
<svg class="i" style="left:485px;top:129px;width:12px;height:12px" viewBox="0 0 12 12"><circle cx="6" cy="6" r="5" fill="#e0403c"/><path d="M3.500 3.500l5 5M8.500 3.500l-5 5" stroke="#fff" stroke-width="1.300"/></svg>
<div style="left:485px;top:324px;width:12px;height:8px;background:#f7cd7a;overflow:hidden"><div style="left:3px;top:2px;width:6px;height:2px;background:#5a4a20"></div><div style="left:7px;top:4px;width:2px;height:2px;background:#5a4a20"></div></div>

<div style="left:516px;top:98px;width:1010px;height:234px;overflow:hidden">
<div class="mono cm" style="left:0;top:0"> * 3) internal and external interfaces from this unit</div>
<div class="mono cm" style="left:0;top:15px">==================================================================================================*/</div>
<div class="mono" style="left:0;top:30px"><span class="inc">#include</span> <span class="str">"CDD_Sbc_fs26.h"</span></div>
<div class="mono" style="left:0;top:45px"><span class="inc">#include</span> <span class="str">"Mcu.h"</span></div>
<div class="mono" style="left:0;top:60px"><span class="inc">#include</span> <span class="str">"Platform.h"</span></div>
<div class="mono" style="left:0;top:75px"><span class="inc">#include</span> <span class="str">"Spi.h"</span></div>
<div class="mono" style="left:0;top:90px"><span class="inc">#include</span> <span class="str">"Gpt.h"</span></div>
<div class="mono" style="left:0;top:105px"><span class="inc">#include</span> <span class="str">"Mcl.h"</span></div>
<div class="mono" style="left:0;top:120px"><span class="inc">#include</span> <span class="str">"Port.h"</span></div>
<div class="mono" style="left:0;top:135px"><span class="inc">#include</span> <span class="str">"Icu.h"</span></div>
<div class="mono" style="left:0;top:150px"><span class="inc">#include</span> <span class="str">"CDD_Uart.h"</span></div>
<div class="mono" style="left:0;top:165px"><span class="inc">#include</span> <span class="str">"CDD_Rm.h"</span></div>
<div class="mono" style="left:0;top:180px"><span class="inc">#include</span> <span class="str">"Lpuart_Uart_Ip_Irq.h"</span></div>
<div class="mono cm" style="left:0;top:210px">/* Including FreeMASTER Driver */</div>
<div class="mono" style="left:0;top:225px"><span class="inc">#include</span> <span class="str">"freemaster.h"</span></div>
</div>
<svg style="position:absolute;left:580px;top:140px" width="113" height="4"><path d="M0 3 l2-2 2 2 2-2 2 2 2-2 2 2 2-2 2 2 2-2 2 2 2-2 2 2 2-2 2 2 2-2 2 2 2-2 2 2 2-2 2 2 2-2 2 2 2-2 2 2 2-2 2 2 2-2 2 2 2-2 2 2 2-2 2 2 2-2 2 2 2-2 2 2 2-2 2 2 2-2 2 2 2-2 2 2 2-2 2 2 2-2 2 2 2-2 2 2 2-2 2 2 2-2 2 2 2-2 2 2 2-2" fill="none" stroke="#e8249a"/></svg>
<div style="left:485px;top:332px;width:1043px;height:16px;background:#f0f0f0"></div>
<svg style="position:absolute;left:518px;top:335px" width="8" height="10"><path d="M7 .5v9L1 5z" fill="#aaa"/></svg>
<svg style="position:absolute;left:1516px;top:335px" width="8" height="10"><path d="M1 .5v9L7 5z" fill="#aaa"/></svg>
<div style="left:1528px;top:98px;width:15px;height:250px;background:#f0f0f0"></div>
<div style="left:1534px;top:135px;width:3px;height:17px;background:#8f8f8f"></div>
<div style="left:1543px;top:98px;width:14px;height:250px;background:#f8f8f8"></div>
<div style="left:1547px;top:102px;width:6px;height:6px;background:#f5006e"></div>
<div style="left:1544px;top:113px;width:12px;height:1px;background:#bbb"></div>
<div style="left:1547px;top:136px;width:6px;height:3px;background:#f9a9c8;border:1px solid #f5458c;box-sizing:content-box"></div>
<div style="left:1546px;top:148px;width:9px;height:15px;background:repeating-linear-gradient(#fbb544 0 2px,#fddfa6 2px 4px)"></div>

<!-- outline -->
<div style="left:1562px;top:72px;width:358px;height:277px;background:#fff;border:1px solid #d4d4d4;box-sizing:border-box"></div>
<div style="left:1563px;top:73px;width:356px;height:24px;background:#e5e5e5;border-bottom:1px solid #d8d8d8"></div>
<div style="left:1563px;top:73px;width:89px;height:25px;background:#f3f3f3"></div>
<div style="left:1563px;top:98px;width:356px;height:21px;background:#f0f0f0"></div>
<svg class="i" style="left:1567px;top:76px"><use href="#otl"/></svg><div class="tb" style="left:1586px">Outline</div><svg class="i" style="left:1633px;top:78px;width:12px;height:12px"><use href="#x"/></svg>
<svg class="i" style="left:1656px;top:76px"><use href="#btg"/></svg><div class="tb" style="left:1676px">Build Targets</div>
<span class="min" style="left:1876px;top:79px"></span><span class="max" style="left:1898px;top:78px"></span>
<svg class="i" style="left:1762px;top:100px"><use href="#col"/></svg><svg class="i" style="left:1784px;top:100px"><use href="#az"/></svg><svg class="i" style="left:1807px;top:100px"><use href="#nf"/></svg><svg class="i" style="left:1829px;top:100px"><use href="#ns"/></svg><svg class="i" style="left:1853px;top:100px"><use href="#dot"/></svg><svg class="i" style="left:1876px;top:100px"><use href="#hsh"/></svg><svg class="i" style="left:1899px;top:100px"><use href="#mor"/></svg>
<div style="left:1903px;top:119px;width:15px;height:229px;background:#f0f0f0"></div>
<div style="left:1909px;top:135px;width:3px;height:79px;background:#8f8f8f"></div>
<div style="left:1563px;top:119px;width:340px;height:229px;overflow:hidden">
<svg class="i" style="left:26px;top:2px;width:14px;height:14px"><use href="#hd"/></svg><svg class="i" style="left:24px;top:0"><use href="#wn"/></svg><div class="o" style="left:52px;top:0;letter-spacing:-.25px">CDD_Sbc_fs26.h</div>
<svg class="i" style="left:26px;top:20px;width:14px;height:14px"><use href="#hd"/></svg><div class="o" style="left:52px;top:18px">Mcu.h</div>
<svg class="i" style="left:26px;top:38px;width:14px;height:14px"><use href="#hd"/></svg><div class="o" style="left:52px;top:36px">Platform.h</div>
<svg class="i" style="left:26px;top:56px;width:14px;height:14px"><use href="#hd"/></svg><div class="o" style="left:52px;top:54px">Spi.h</div>
<svg class="i" style="left:26px;top:74px;width:14px;height:14px"><use href="#hd"/></svg><div class="o" style="left:52px;top:72px">Gpt.h</div>
<svg class="i" style="left:26px;top:92px;width:14px;height:14px"><use href="#hd"/></svg><div class="o" style="left:52px;top:90px">Mcl.h</div>
<svg class="i" style="left:26px;top:110px;width:14px;height:14px"><use href="#hd"/></svg><div class="o" style="left:52px;top:108px">Port.h</div>
<svg class="i" style="left:26px;top:128px;width:14px;height:14px"><use href="#hd"/></svg><div class="o" style="left:52px;top:126px">Icu.h</div>
<svg class="i" style="left:26px;top:146px;width:14px;height:14px"><use href="#hd"/></svg><div class="o" style="left:52px;top:144px;letter-spacing:-.25px">CDD_Uart.h</div>
<svg class="i" style="left:26px;top:164px;width:14px;height:14px"><use href="#hd"/></svg><div class="o" style="left:52px;top:162px;letter-spacing:-.4px">CDD_Rm.h</div>
<svg class="i" style="left:26px;top:182px;width:14px;height:14px"><use href="#hd"/></svg><div class="o" style="left:52px;top:180px;letter-spacing:-.3px">Lpuart_Uart_Ip_Irq.h</div>
<svg class="i" style="left:26px;top:200px;width:14px;height:14px"><use href="#hd"/></svg><svg class="i" style="left:24px;top:198px"><use href="#wn"/></svg><div class="o" style="left:52px;top:198px">freemaster.h</div>
<svg class="i" style="left:26px;top:218px;width:14px;height:14px"><use href="#hd"/></svg><div class="o" style="left:52px;top:216px">freemaster_cfg.h</div>
</div>

<!-- console -->
<div style="left:484px;top:352px;width:1436px;height:654px;background:#fff;border:1px solid #d4d4d4;box-sizing:border-box"></div>
<div style="left:485px;top:353px;width:1434px;height:25px;background:#f0f0f0;border-bottom:1px solid #d8d8d8"></div>
<div style="left:485px;top:353px;width:137px;height:25px;background:#ececec"></div>
<div style="left:622px;top:353px;width:93px;height:26px;background:#f5f5f5"></div>
<svg class="i" style="left:487px;top:358px"><use href="#prb"/></svg><div style="left:508px;top:357px;color:#222">Problems</div>
<svg class="i" style="left:567px;top:358px"><use href="#tsk"/></svg><div style="left:588px;top:357px;color:#222;letter-spacing:-.3px">Tasks</div>
<svg class="i" style="left:626px;top:358px"><use href="#bmn"/></svg><div style="left:646px;top:357px;color:#222;letter-spacing:-.1px">Console</div><svg class="i" style="left:696px;top:360px;width:12px;height:12px"><use href="#x"/></svg>
<svg class="i" style="left:720px;top:358px"><use href="#prp"/></svg><div style="left:739px;top:357px;color:#222;letter-spacing:-.2px">Properties</div>
<svg class="i" style="left:803px;top:358px"><use href="#inb"/></svg><div style="left:822px;top:357px;color:#222">Include Browser</div>
<svg class="i" style="left:1544px;top:358px"><use href="#gx"/></svg><div style="left:1565px;top:357px;width:1px;height:18px;background:#999"></div>
<svg class="i" style="left:1574px;top:358px"><use href="#dn"/></svg><svg class="i" style="left:1597px;top:358px"><use href="#up"/></svg>
<div style="left:1617px;top:355px;width:21px;height:20px;background:#cde6fb;border:1px solid #99d1ff;border-radius:3px"></div>
<svg class="i" style="left:1621px;top:358px"><use href="#lnk"/></svg><div style="left:1642px;top:357px;width:1px;height:18px;background:#999"></div>
<svg class="i" style="left:1651px;top:358px"><use href="#c1"/></svg><svg class="i" style="left:1674px;top:358px"><use href="#c2"/></svg><svg class="i" style="left:1697px;top:358px"><use href="#c3"/></svg><svg class="i" style="left:1720px;top:358px"><use href="#c4"/></svg>
<div style="left:1740px;top:355px;width:21px;height:20px;background:#cde6fb;border:1px solid #99d1ff;border-radius:3px"></div>
<svg class="i" style="left:1744px;top:358px"><use href="#c5"/></svg><div style="left:1765px;top:357px;width:1px;height:18px;background:#999"></div>
<svg class="i" style="left:1774px;top:358px"><use href="#pup"/></svg><svg class="i" style="left:1798px;top:358px"><use href="#bmn"/></svg><span class="ar" style="left:1820px;top:364px"></span>
<svg class="i" style="left:1836px;top:358px"><use href="#c6"/></svg><span class="ar" style="left:1858px;top:364px"></span>
<span class="min" style="left:1876px;top:361px"></span><span class="max" style="left:1898px;top:360px"></span>

<div style="left:485px;top:379px;width:1434px;height:15px;background:#fff;border-bottom:1px solid #aaa;line-height:17px;color:#111;letter-spacing:-.2px;text-indent:-1px">CDT Build Console [HVBMS_RD_IntProj_775_772_S32DS]</div>
<div style="left:1902px;top:395px;width:17px;height:610px;background:#f0f0f0"></div>
<div style="left:1910px;top:922px;width:3px;height:49px;background:#8f8f8f"></div>

<div class="mono" style="left:486px;top:395px;width:1416px;height:593px;overflow:hidden">
<div style="left:0;top:-7px;width:1416px">
<div class="l" style="top:0">      |      ^~~~~~</div>
<div class="l w" style="top:15px">../RTD/include/Emios_Icu_Ip_Types.h:427:7: warning: "STD_ON" is not defined, evaluates to 0 [-Wundef]</div>
<div class="l" style="top:30px">  427 | #if ((STD_ON == EMIOS_ICU_IP_SIGNALMEASUREMENT_USES_DMA_IPL) || (STD_ON == EMIOS_ICU_IP_TIMESTAMP_USES_DMA_IPL))</div>
<div class="l" style="top:45px">      |       ^~~~~~</div>
<div class="l w" style="top:60px">../RTD/include/Emios_Icu_Ip_Types.h:427:17: warning: "EMIOS_ICU_IP_SIGNALMEASUREMENT_USES_DMA_IPL" is not defined, evaluates to 0 [-Wundef]</div>
<div class="l" style="top:75px">  427 | #if ((STD_ON == EMIOS_ICU_IP_SIGNALMEASUREMENT_USES_DMA_IPL) || (STD_ON == EMIOS_ICU_IP_TIMESTAMP_USES_DMA_IPL))</div>
<div class="l" style="top:90px">      |                 ^~~~~~~~~~~~~~~~~~~~~~~~~~~~~~~~~~~~~~~~~~~</div>
<div class="l e" style="top:105px">../RTD/include/Emios_Icu_Ip_Types.h:429:5: error: unknown type name 'uint8'</div>
<div class="l" style="top:120px">  429 |     uint8                                           dmaChannel;</div>
<div class="l" style="top:135px">      |     ^~~~~</div>
<div class="l e" style="top:150px">../RTD/include/Emios_Icu_Ip_Types.h:445:5: error: unknown type name 'boolean'</div>
<div class="l" style="top:165px">  445 |     boolean                                         notificationEnable;</div>
<div class="l" style="top:180px">      |     ^~~~~~~</div>
<div class="l e" style="top:195px">../RTD/include/Emios_Icu_Ip_Types.h:447:5: error: unknown type name 'boolean'</div>
<div class="l" style="top:210px">  447 |     boolean                                         channelsInitState;</div>
<div class="l" style="top:225px">      |     ^~~~~~~</div>
<div class="l w" style="top:240px">../generate/src/Emios_Icu_Ip_VS_0_PBcfg.c:47:6: warning: "STD_ON" is not defined, evaluates to 0 [-Wundef]</div>
<div class="l" style="top:255px">   47 | #if (STD_ON == EMIOS_ICU_IP_USED)</div>
<div class="l" style="top:270px">      |      ^~~~~~</div>
<div class="l w" style="top:285px">../generate/src/Emios_Icu_Ip_VS_0_PBcfg.c:47:16: warning: "EMIOS_ICU_IP_USED" is not defined, evaluates to 0 [-Wundef]</div>
<div class="l" style="top:300px">   47 | #if (STD_ON == EMIOS_ICU_IP_USED)</div>
<div class="l" style="top:315px">      |                ^~~~~~~~~~~~~~~~~</div>
<div class="l w" style="top:330px">../generate/src/Emios_Icu_Ip_VS_0_PBcfg.c:48:11: warning: "STD_ON" is not defined, evaluates to 0 [-Wundef]</div>
<div class="l" style="top:345px">   48 |     #if ((STD_ON == EMIOS_ICU_IP_SIGNALMEASUREMENT_USES_DMA_IPL) || (STD_ON == EMIOS_ICU_IP_TIMESTAMP_USES_DMA_IPL))</div>
<div class="l" style="top:360px">      |           ^~~~~~</div>
<div class="l w" style="top:375px">../generate/src/Emios_Icu_Ip_VS_0_PBcfg.c:48:21: warning: "EMIOS_ICU_IP_SIGNALMEASUREMENT_USES_DMA_IPL" is not defined, evaluates to 0 [-Wundef]</div>
<div class="l" style="top:390px">   48 |     #if ((STD_ON == EMIOS_ICU_IP_SIGNALMEASUREMENT_USES_DMA_IPL) || (STD_ON == EMIOS_ICU_IP_TIMESTAMP_USES_DMA_IPL))</div>
<div class="l" style="top:405px">      |                     ^~~~~~~~~~~~~~~~~~~~~~~~~~~~~~~~~~~~~~~~~~~</div>
<div class="l w" style="top:420px">../generate/src/Emios_Icu_Ip_VS_0_PBcfg.c:69:20: warning: "EMIOS_ICU_IP_USED" is not defined, evaluates to 0 [-Wundef]</div>
<div class="l" style="top:435px">   69 |     #if (STD_ON == EMIOS_ICU_IP_USED)</div>
<div class="l" style="top:450px">      |                    ^~~~~~~~~~~~~~~~~</div>
<div class="l w" style="top:465px">../generate/src/Emios_Icu_Ip_VS_0_PBcfg.c:101:16: warning: "EMIOS_ICU_IP_USED" is not defined, evaluates to 0 [-Wundef]</div>
<div class="l" style="top:480px">  101 | #if (STD_ON == EMIOS_ICU_IP_USED)</div>
<div class="l" style="top:495px">      |                ^~~~~~~~~~~~~~~~~</div>
<div class="l e" style="top:510px">make: *** [generate/src/subdir.mk:209: generate/src/Emios_Icu_Ip_VS_0_PBcfg.o] Error 1</div>
<div class="l" style="top:525px">"make -j16 all" terminated with exit code 2. Build might be incomplete.</div>
<div class="l" style="top:555px;color:#0000ff">16:02:33 Build Failed. 52 errors, 53 warnings. (took 2s.526ms)</div>
</div></div>
<div style="left:920px;top:945px;width:1px;height:15px;background:#000"></div>
<div style="left:485px;top:988px;width:1417px;height:17px;background:#f0f0f0"></div>
<svg style="position:absolute;left:488px;top:992px" width="8" height="10"><path d="M7 .5v9L1 5z" fill="#aaa"/></svg>

<!-- status grip -->
<div style="left:1635px;top:1012px;width:2px;height:16px;background:repeating-linear-gradient(#b8ae98 0 2px,transparent 2px 4px)"></div>

<!-- popup -->
<div style="left:1639px;top:898px;width:262px;height:116px;background:#fff;border:1px solid #b0aaa8;border-radius:9px;box-sizing:border-box;box-shadow:0 2px 14px rgba(0,0,0,.28);overflow:hidden">
<div style="left:0;top:0;width:262px;height:6px;background:#f5f5f5"></div>
<div style="left:0;top:29px;width:262px;height:1px;background:#a8a8a8"></div>
</div>
<div style="left:1640px;top:907px;font-weight:bold;color:#000;letter-spacing:.17px">New module available notification dialog</div>
<svg class="i" style="left:1883px;top:910px;width:13px;height:13px" viewBox="0 0 13 13"><path d="M2 2l9 9M11 2l-9 9" stroke="#6486bc" stroke-width="3.400"/></svg>
<svg style="position:absolute;left:1653px;top:942px" width="60" height="60" viewBox="0 0 60 60">
<defs><radialGradient id="bg" cx=".45" cy=".3" r=".8"><stop offset="0" stop-color="#22a8e2"/><stop offset=".6" stop-color="#0f6cb8"/><stop offset="1" stop-color="#093f7e"/></radialGradient></defs>
<rect width="60" height="60" fill="url(#bg)"/>
<path d="M8 0v18l8 8v34M16 0v12l10 8M44 0l16 16M52 0l8 8M40 60V48l14-14h6M48 60v-8l12-10M2 30l8 8v22" stroke="#5cc0ee" stroke-opacity=".45" fill="none"/>
<circle cx="30" cy="30" r="19.500" fill="none" stroke="#fff" stroke-width="1.500"/>
<path d="M18 29a12 12 0 0 1 20-8" fill="none" stroke="#fff" stroke-width="3.400"/><path d="M35 16l8 1-1 8z" fill="#fff" transform="translate(-1 1)"/>
<path d="M42 31a12 12 0 0 1-20 8" fill="none" stroke="#fff" stroke-width="3.400"/><path d="M25 44l-8-1 1-8z" fill="#fff" transform="translate(1 -1)"/>
</svg>
<div style="left:1724px;top:962px;color:#111;letter-spacing:.05px">New modules available</div>
</body></html>
